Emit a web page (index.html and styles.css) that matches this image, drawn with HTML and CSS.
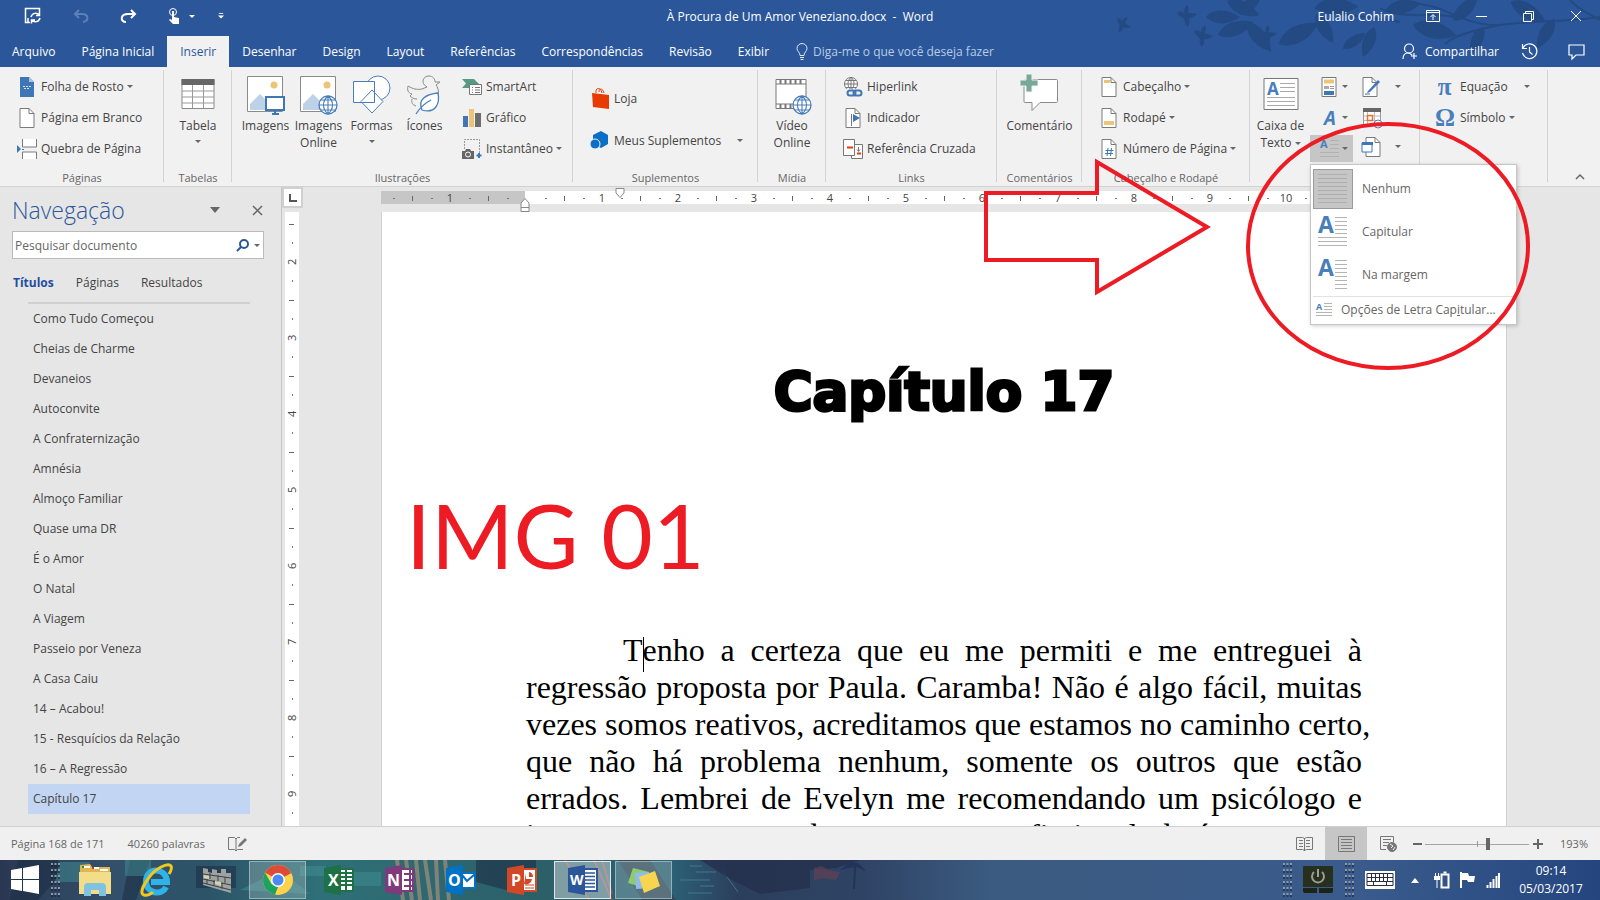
FILE: index.html
```html
<!DOCTYPE html>
<html lang="pt-BR">

<head>
    <meta charset="UTF-8">
    <meta name="viewport" content="width=device-width, initial-scale=1.0">
    <title>À Procura de Um Amor Veneziano.docx - Word</title>
    <link rel="stylesheet" href="styles.css">
</head>

<body>
    <!-- Shared shapes -->
    <svg class="defs" width="0" height="0">
        <symbol id="page" viewBox="0 0 16 20">
            <path d="M1 .5h9l5 5v14H1z" fill="#fff" stroke="#7a7a7a" />
            <path d="M10 .5v5h5" fill="none" stroke="#7a7a7a" />
        </symbol>
        <symbol id="globe" viewBox="0 0 20 20">
            <circle cx="10" cy="10" r="9" fill="#fff" stroke="#4a7ebb" stroke-width="1.3" />
            <path d="M10 1v18M1 10h18M3 5h14M3 15h14M10 1c-6 5-6 13 0 18M10 1c6 5 6 13 0 18" fill="none" stroke="#4a7ebb" stroke-width="1.1" />
        </symbol>
        <symbol id="leaf" viewBox="0 0 30 12">
            <path d="M0 6C7-2 20-1 30 6C20 13 8 14 0 6z" fill="#234a82" />
        </symbol>
        <symbol id="bird" viewBox="0 0 24 24">
            <path d="M1 9c4-3 6-2 8 0c-1-4 1-7 3-9c2 3 2 6 1 9c3-1 6 1 10 0c-2 4-6 5-9 6c1 3 1 6-1 9c-3-3-4-6-4-9c-3-1-5-3-8-6z" fill="#234a82" />
        </symbol>
        <symbol id="grip" viewBox="0 0 10 34">
            <path d="M1 1h9M1 7h9M1 13h9M1 19h9M1 25h9M1 31h9" stroke="#8c98aa" stroke-width="2" stroke-dasharray="2 1.5" />
            <path d="M1 3h9M1 9h9M1 15h9M1 21h9M1 27h9M1 33h9" stroke="#101827" stroke-width="1" stroke-dasharray="2 1.5" />
        </symbol>
    </svg>

    <header class="top">
        <svg class="branches" width="500" height="67" viewBox="0 0 500 67">
            <g fill="none" stroke="#234a82" stroke-width="2">
                <path d="M500 17C470 22 440 20 400 25C370 27 345 8 330 6L300 0M355 17C330 12 300 20 280 8M400 25C375 30 355 35 345 44M300 22C270 16 240 16 215 8M500 20C490 14 478 10 470 0M372 30C385 40 380 48 375 50" />
            </g>
            <use href="#leaf" x="106" y="10" width="34" height="14" />
            <use href="#leaf" x="125" y="0" width="36" height="14" transform="rotate(24 140 8)" />
            <use href="#leaf" x="117" y="22" width="38" height="15" transform="rotate(-20 133 30)" />
            <use href="#leaf" x="150" y="16" width="38" height="16" transform="rotate(50 150 20)" />
            <use href="#leaf" x="135" y="0" width="30" height="12" transform="rotate(-40 148 5)" />
            <use href="#leaf" x="176" y="26" width="46" height="18" transform="rotate(-28 196 35)" />
            <use href="#leaf" x="215" y="-2" width="44" height="17" />
            <use href="#leaf" x="212" y="16" width="34" height="14" transform="rotate(60 222 22)" />
            <use href="#leaf" x="262" y="26" width="32" height="13" transform="rotate(110 270 34)" />
            <use href="#leaf" x="312" y="20" width="46" height="18" transform="rotate(14 330 28)" />
            <use href="#leaf" x="350" y="3" width="36" height="14" transform="rotate(-45 365 12)" />
            <use href="#leaf" x="375" y="30" width="30" height="12" transform="rotate(115 382 34)" />
            <use href="#leaf" x="285" y="0" width="36" height="14" transform="rotate(-10 300 5)" />
            <use href="#leaf" x="410" y="4" width="40" height="16" transform="rotate(30 430 8)" />
            <use href="#leaf" x="440" y="22" width="34" height="14" transform="rotate(120 450 28)" />
            <use href="#leaf" x="240" y="38" width="28" height="11" transform="rotate(-35 250 42)" />
            <use href="#bird" x="14" y="14" width="18" height="20" transform="rotate(30 22 24)" />
            <use href="#bird" x="76" y="4" width="22" height="24" />
            <use href="#bird" x="92" y="24" width="22" height="24" transform="rotate(12 103 36)" />
            <use href="#bird" x="158" y="24" width="20" height="22" />
        </svg>

        <div class="titlebar">
            <div class="quick">
                <button class="icon-btn" aria-label="Salvar"><svg width="18" height="18" viewBox="0 0 18 18" fill="none" stroke="#fff" stroke-width="1.5"><path d="M6 15.500H1.500V1.500H15.500V5" /><path d="M4 11v4" /><path d="M7 10c1-4 6-5 8-2M15.500 5v3.500H12M16 11c-1 4-6 5-8 2M7.500 16.500V13H11" /></svg></button>
                <button class="icon-btn" aria-label="Desfazer"><svg width="16" height="14" viewBox="0 0 16 14" fill="none" stroke="#5b80ba" stroke-width="2"><path d="M6 1L2 5l4 4M2 5h7c7 0 7 7 1 8" /></svg></button>
                <button class="icon-btn" aria-label="Refazer"><svg width="17" height="15" viewBox="0 0 17 15" fill="none" stroke="#fff" stroke-width="2"><path d="M11 1l4 4l-4 4M15 5H8C0 5 0 13 6 13" /></svg></button>
                <button class="icon-btn touch" aria-label="Modo de toque"><svg width="12" height="16" viewBox="0 0 12 16"><circle cx="5" cy="4" r="3.500" fill="none" stroke="#fff" /><path d="M4 3h2v6l5 1v6H5L1 12l1-1l2 1z" fill="#fff" /></svg><i class="caret white"></i></button>
                <button class="icon-btn custom" aria-label="Personalizar"><svg width="6" height="8" viewBox="0 0 7 8"><path d="M1 1h5" stroke="#fff" /><path d="M0 3.500h7L3.500 7z" fill="#fff" /></svg></button>
            </div>
            <div class="doc-title">À Procura de Um Amor Veneziano.docx &nbsp;-&nbsp; Word</div>
            <div class="window-tools">
                <span class="user">Eulalio Cohim</span>
                <button class="icon-btn" aria-label="Opções da faixa"><svg width="14" height="12" viewBox="0 0 14 12" fill="none" stroke="#fff"><path d="M.5 .5h13v11H.5zM.5 2.500h13M7 10V5M4.500 7L7 4.500L9.500 7" /></svg></button>
                <button class="icon-btn" aria-label="Minimizar"><svg width="11" height="11" viewBox="0 0 11 11"><path d="M0 5.500h11" stroke="#fff" /></svg></button>
                <button class="icon-btn" aria-label="Restaurar"><svg width="11" height="11" viewBox="0 0 11 11" fill="none" stroke="#fff"><path d="M.5 2.500h8v8h-8zM2.500 2.500v-2h8v8h-2" /></svg></button>
                <button class="icon-btn" aria-label="Fechar"><svg width="12" height="12" viewBox="0 0 12 12"><path d="M1 1l10 10M11 1L1 11" stroke="#fff" /></svg></button>
            </div>
        </div>

        <nav class="tabs">
            <a href="#">Arquivo</a>
            <a href="#">Página Inicial</a>
            <a href="#" class="active">Inserir</a>
            <a href="#">Desenhar</a>
            <a href="#">Design</a>
            <a href="#">Layout</a>
            <a href="#">Referências</a>
            <a href="#">Correspondências</a>
            <a href="#">Revisão</a>
            <a href="#">Exibir</a>
            <label class="tell-me">
                <svg width="12" height="17" viewBox="0 0 12 17" fill="none" stroke="#dfe8f5"><path d="M4 12.500C4 9 1 8.500 1 5.500a5 5 0 0 1 10 0C11 8.500 8 9 8 12.500zM4 14.500h4M4.500 16.500h3" /></svg>
                <input type="text" placeholder="Diga-me o que você deseja fazer">
            </label>
            <div class="tab-tools">
                <button class="icon-btn share"><svg width="16" height="17" viewBox="0 0 16 17" fill="none" stroke="#fff" stroke-width="1.200"><circle cx="7" cy="5.500" r="4.500" /><path d="M1 16c0-4 2-6 5-6c2 0 3 1 4 2M12 10v6M9 13h6" /></svg>Compartilhar</button>
                <button class="icon-btn" aria-label="Histórico"><svg width="17" height="17" viewBox="0 0 17 17" fill="none" stroke="#fff" stroke-width="1.200"><path d="M2 5a7.300 7.300 0 1 1-.5 5M1.500 1v4.500H6M8.500 4v5l3 2.500" /></svg></button>
                <button class="icon-btn" aria-label="Comentários"><svg width="17" height="16" viewBox="0 0 17 16" fill="none" stroke="#fff" stroke-width="1.200"><path d="M1 1h15v10H8l-4 4v-4H1z" /></svg></button>
            </div>
        </nav>
    </header>

    <section class="ribbon">
        <div class="group g-paginas">
            <div class="rows">
                <button class="cmd"><svg width="16" height="20" viewBox="0 0 16 20"><path d="M1 0h9l5 5v15H1z" fill="#3f76b5" /><path d="M10 0v5h5z" fill="#a9c3e0" /><path d="M4 9.500h8M5 11.500h6" stroke="#cfe0f2" stroke-dasharray="2 1" /></svg>Folha de Rosto<i class="caret"></i></button>
                <button class="cmd"><svg width="16" height="20"><use href="#page" /></svg>Página em Branco</button>
                <button class="cmd"><svg class="wide" width="20" height="20" viewBox="0 0 20 20"><path d="M5.500 0v8h14V0M5.500 20v-7h14v7" fill="#fff" stroke="#7a7a7a" /><path d="M0 6l4 4l-4 4z" fill="#3f76b5" /><path d="M5 10.500h2" stroke="#3f76b5" /></svg>Quebra de Página</button>
            </div>
            <div class="group-name">Páginas</div>
        </div>

        <div class="group g-tabelas">
            <div class="bigs">
                <button class="big"><svg width="36" height="40" viewBox="0 0 36 40"><path d="M2 4.500h32v29H2z" fill="#fff" stroke="#8a8a8a" /><path d="M1.500 4h33v6h-33z" fill="#666" /><path d="M2 16h32M2 22h32M2 28h32M12.500 10v23M23.500 10v23" stroke="#999" /></svg>Tabela<i class="caret"></i></button>
            </div>
            <div class="group-name">Tabelas</div>
        </div>

        <div class="group g-ilustra">
            <div class="bigs">
                <button class="big"><svg width="40" height="40" viewBox="0 0 40 40"><path d="M1.500 1.500h35v35h-35z" fill="#fff" stroke="#8a8a8a" /><circle cx="28" cy="10" r="3.500" fill="#ecc477" /><path d="M4 35V29L14 19l9 9v7z" fill="#bdd1e8" /><path d="M20 22h18v13H20z" fill="#fff" stroke="#3f76b5" stroke-width="2" /><path d="M29 35v3M26 39h7" stroke="#3f76b5" stroke-width="2" /></svg>Imagens</button>
                <button class="big"><svg width="40" height="40" viewBox="0 0 40 40"><path d="M1.500 1.500h35v35h-35z" fill="#fff" stroke="#8a8a8a" /><circle cx="28" cy="10" r="3.500" fill="#ecc477" /><path d="M4 35V29L14 19l9 9v7z" fill="#bdd1e8" /><use href="#globe" x="19" y="20" width="20" height="20" /></svg>Imagens Online</button>
                <button class="big"><svg width="40" height="40" viewBox="0 0 40 40" fill="#fff" stroke="#4a7ebb"><circle cx="26" cy="13" r="12" /><path d="M1.500 6.500h21v21h-21zM20 15l11 11.500L20 38L9 26.500z" /></svg>Formas<i class="caret"></i></button>
                <button class="big"><svg width="40" height="40" viewBox="0 0 40 40" fill="none" stroke="#8a8a8a"><path d="M22 12C15 8 18 1 24 1c4 0 6 3 6 6h5l-4 3c3 4 3 8 1 12M22 12l-5 2c-5 1-9 0-14-3c-1 4 0 7 4 8l-2 2c2 2 4 3 7 3M7 24c-1 4 1 6 4 7" /><path d="M33 18c2 10-2 21-16 17c-5-11 5-16 16-17zM11 39c5-8 9-11 15-14" fill="#fff" stroke="#4a7ebb" stroke-width="1.300" /></svg>Ícones</button>
            </div>
            <div class="rows">
                <button class="cmd"><svg class="wide" width="20" height="20" viewBox="0 0 20 20"><path d="M0 2h12l5 5l-5 4H0l4-4.500z" fill="#569a83" /><path d="M7.500 7.500h12v10h-12z" fill="#fff" stroke="#777" /><path d="M10 10.500h1M13 10.500h5M10 13h1M13 13h5M10 15.500h1M13 15.500h5" stroke="#777" /></svg>SmartArt</button>
                <button class="cmd"><svg class="wide" width="20" height="20" viewBox="0 0 20 20"><path d="M1 8h5v11H1z" fill="#3f76b5" /><path d="M7 1h5v18H7z" fill="#ecc477" /><path d="M13 5h6v14h-6z" fill="#6d6d6d" /></svg>Gráfico</button>
                <button class="cmd"><svg class="wide" width="20" height="20" viewBox="0 0 20 20"><path d="M2.500 10V.5h15V14" fill="none" stroke="#999" stroke-dasharray="2 1" /><path d="M0 12h3l1-2h4l1 2h3v8H0z" fill="#666" /><circle cx="6" cy="15.500" r="2.500" fill="#666" stroke="#fff" /><path d="M17 14v5M14.500 16.500h5" stroke="#3f76b5" stroke-width="2" /></svg>Instantâneo<i class="caret"></i></button>
            </div>
            <div class="group-name">Ilustrações</div>
        </div>

        <div class="group g-suple">
            <div class="rows two">
                <button class="cmd"><svg class="wide" width="20" height="22" viewBox="0 0 20 22"><path d="M2 6l17 2v14L3 20z" fill="#e83b04" /><path d="M6 6c-1-6 5-6 6 0M9 5c0-4 4-4 5 1" fill="none" stroke="#e83b04" /></svg>Loja</button>
                <button class="cmd"><svg class="wide" width="20" height="20" viewBox="0 0 20 20"><path d="M3 5l8-4l7 4v9l-7 4l-8-4z" fill="#0b6fc8" /><circle cx="5" cy="14" r="5" fill="#0b6fc8" stroke="#f1f1f1" /></svg>Meus Suplementos<i class="caret far"></i></button>
            </div>
            <div class="group-name">Suplementos</div>
        </div>

        <div class="group g-midia">
            <div class="bigs">
                <button class="big"><svg width="40" height="40" viewBox="0 0 40 40"><path d="M4 4.500h30v29H4z" fill="#fff" stroke="#777" /><path d="M4 9h30M4 29h18" stroke="#777" /><path d="M8.500 5v4M13.500 5v4M18.500 5v4M23.500 5v4M28.500 5v4M8.500 29v4M13.500 29v4M18.500 29v4" stroke="#777" stroke-width="2" /><use href="#globe" x="20" y="20" width="20" height="20" /></svg>Vídeo Online</button>
            </div>
            <div class="group-name">Mídia</div>
        </div>

        <div class="group g-links">
            <div class="rows">
                <button class="cmd"><svg class="wide" width="20" height="20" viewBox="0 0 20 20" fill="none"><circle cx="8" cy="7" r="6.500" fill="#fff" stroke="#777" /><path d="M8 0v14M1 7h14M3 3.500h10M3 10.500h10M8 0c-4 4-4 9 0 13M8 0c4 4 4 9 0 13" stroke="#777" /><path d="M3 12h16v8H3z" fill="#f1f1f1" /><rect x="4.500" y="13.500" width="8" height="5" rx="2.500" stroke="#3f76b5" stroke-width="2" /><rect x="10.500" y="13.500" width="8" height="5" rx="2.500" stroke="#3f76b5" stroke-width="2" /></svg>Hiperlink</button>
                <button class="cmd"><svg class="wide" width="20" height="20" viewBox="0 0 20 20"><use href="#page" x="2" width="16" height="20" /><path d="M8.500 6v12" stroke="#777" /><path d="M10 6l7 4l-7 4z" fill="#3f76b5" /></svg>Indicador</button>
                <button class="cmd"><svg class="wide" width="20" height="20" viewBox="0 0 20 20"><path d="M8.500 5.500h11v14h-11z" fill="#fff" stroke="#777" /><path d="M.5 .5h11v16H.5z" fill="#fff" stroke="#777" /><path d="M4 8.500h6M14 14.500h4" stroke="#e83b04" stroke-width="2" /><path d="M15.500 8v4M14 10.500l1.500 2l1.500-2" stroke="#777" fill="none" /></svg>Referência Cruzada</button>
            </div>
            <div class="group-name">Links</div>
        </div>

        <div class="group g-coment">
            <div class="bigs">
                <button class="big"><svg width="40" height="40" viewBox="0 0 40 40"><path d="M5.500 4.500h31q1 0 1 1v21q0 1-1 1H20l-8 8v-8H5q-1 0-1-1V5.500z" fill="#fff" stroke="#8a8a8a" /><path d="M6-1h6v6h6v6h-6v6H6v-6H0V5h6z" fill="#77a898" stroke="#f1f1f1" /></svg>Comentário</button>
            </div>
            <div class="group-name">Comentários</div>
        </div>

        <div class="group g-cabec">
            <div class="rows">
                <button class="cmd"><svg width="16" height="20" viewBox="0 0 16 20"><use href="#page" /><path d="M3 3h6v3H3z" fill="#ecc477" /></svg>Cabeçalho<i class="caret"></i></button>
                <button class="cmd"><svg width="16" height="20" viewBox="0 0 16 20"><use href="#page" /><path d="M3 13h10v4H3z" fill="#ecc477" /></svg>Rodapé<i class="caret"></i></button>
                <button class="cmd"><svg width="16" height="20" viewBox="0 0 16 20"><use href="#page" /><path d="M7 9l-1 8M10.500 9l-1 8M4.500 11.500h8M4 14.500h8" stroke="#3f76b5" /></svg>Número de Página<i class="caret"></i></button>
            </div>
            <div class="group-name">Cabeçalho e Rodapé</div>
        </div>

        <div class="group g-texto">
            <div class="bigs">
                <button class="big"><svg width="40" height="40" viewBox="0 0 40 40"><path d="M3 3.500h34v31H3z" fill="#fff" stroke="#777" /><text x="6" y="20" class="letter" font-size="17">A</text><path d="M19 8.500h15M19 12.500h15M19 16.500h15M6 22.500h28M6 26.500h28M6 30.500h28" stroke="#aaa" /></svg><span>Caixa de Texto<i class="caret"></i></span></button>
            </div>
            <div class="mini">
                <button class="mini-btn" aria-label="Partes Rápidas"><svg width="20" height="20" viewBox="0 0 20 20"><path d="M3 .5h14v19H3z" fill="#fff" stroke="#777" /><path d="M5 2.500h10v4H5z" fill="#ecc477" /><path d="M5 9h5v3H5z" fill="#aaa" /><path d="M11 9.500h4M11 11.500h4" stroke="#999" /><path d="M5 14h10v4H5z" fill="#3f76b5" /></svg><i class="caret"></i></button>
                <button class="mini-btn b" aria-label="Linha de Assinatura"><svg width="20" height="20" viewBox="0 0 20 20"><use href="#page" x="0" width="16" height="20" /><path d="M6 14L16 3l2 2L8 15l-3 1z" fill="#3f76b5" /><path d="M3 17h5" stroke="#3f76b5" /></svg><i class="caret"></i></button>
                <button class="mini-btn" aria-label="WordArt"><svg width="20" height="20" viewBox="0 0 20 20"><text x="5" y="17" class="letter" font-size="19" font-style="italic">A</text></svg><i class="caret"></i></button>
                <button class="mini-btn b" aria-label="Data e Hora"><svg width="20" height="20" viewBox="0 0 20 20"><path d="M1.500 1.500h17v16h-17z" fill="#fff" stroke="#999" /><path d="M1 0h18v4H1z" fill="#666" /><path d="M2 8h16M2 12.500h16M5.500 4v13M12.500 4v13" stroke="#bbb" /><path d="M5.500 7.500h5v5h-5z" fill="#fff" stroke="#e2702f" stroke-width="1.500" /><circle cx="16" cy="16" r="4" fill="#fff" stroke="#4a7ebb" /><path d="M16 14v2h2" fill="none" stroke="#4a7ebb" /></svg></button>
                <button class="mini-btn pressed" aria-label="Letra Capitular"><svg width="20" height="20" viewBox="0 0 20 20"><text x="1" y="9" class="letter" font-size="11">A</text><path d="M11 1.500h9M11 5.500h9M11 9.500h9M1 13.500h19M1 17.500h19" stroke="#b1b1b1" /></svg><i class="caret"></i></button>
                <button class="mini-btn b" aria-label="Objeto"><svg width="20" height="20" viewBox="0 0 20 20"><use href="#page" x="3" width="16" height="20" /><path d="M0 6h10v9H0z" fill="#fff" stroke="#3f76b5" /><path d="M0 5h11v3H0z" fill="#3f76b5" /></svg><i class="caret"></i></button>
            </div>

            <!-- Drop cap menu, open under its button -->
            <div class="menu" role="menu">
                <button class="menu-item"><span class="menu-pic on"><svg width="34" height="34" viewBox="0 0 34 34"><path d="M2 2.500h29M2 6.500h29M2 10.500h29M2 14.500h29M2 18.500h29M2 22.500h29M2 26.500h29M2 30.500h29" stroke="#aeaeae" /></svg></span>Nenhum</button>
                <button class="menu-item"><span class="menu-pic"><svg width="34" height="34" viewBox="0 0 34 34"><text x="2" y="18" class="letter" font-size="23">A</text><path d="M19 2.500h12M19 6.500h12M19 10.500h12M19 14.500h12M19 18.500h12M2 22.500h29M2 26.500h29M2 30.500h29" stroke="#b4b4b4" /></svg></span>Capitular</button>
                <button class="menu-item"><span class="menu-pic"><svg width="34" height="34" viewBox="0 0 34 34"><text x="2" y="18" class="letter" font-size="23">A</text><path d="M19 2.500h12M19 6.500h12M19 10.500h12M19 14.500h12M19 18.500h12M19 22.500h12M19 26.500h12M19 30.500h12" stroke="#b4b4b4" /></svg></span>Na margem</button>
                <button class="menu-item options"><svg width="16" height="16" viewBox="0 0 16 16"><text x="0" y="8" class="letter" font-size="9">A</text><path d="M8 1.500h8M8 4.500h8M8 7.500h8M0 10.500h16M0 13.500h16" stroke="#b4b4b4" /></svg><span>Opções de Letra Cap<u>i</u>tular...</span></button>
            </div>
        </div>

        <div class="group g-simb">
            <div class="rows">
                <button class="cmd"><span class="greek">π</span>Equação<i class="caret far"></i></button>
                <button class="cmd"><span class="greek">Ω</span>Símbolo<i class="caret"></i></button>
            </div>
        </div>

        <button class="icon-btn collapse" aria-label="Recolher a faixa"><svg width="10" height="6" viewBox="0 0 10 6" fill="none" stroke="#666" stroke-width="1.500"><path d="M1 5l4-4l4 4" /></svg></button>
    </section>

    <main class="work">
        <aside class="nav-pane">
            <div class="nav-head">
                <h2>Navegação</h2>
                <button class="icon-btn" aria-label="Opções do painel"><svg width="10" height="6" viewBox="0 0 10 6"><path d="M0 0h10L5 6z" fill="#666" /></svg></button>
                <button class="icon-btn" aria-label="Fechar painel"><svg width="11" height="11" viewBox="0 0 11 11"><path d="M1 1l9 9M10 1l-9 9" stroke="#666" stroke-width="1.500" /></svg></button>
            </div>
            <label class="search">
                <input type="text" placeholder="Pesquisar documento">
                <svg width="13" height="13" viewBox="0 0 13 13" fill="none" stroke="#2b579a" stroke-width="2"><circle cx="8" cy="5" r="4" /><path d="M5 8l-4 4" /></svg>
                <i class="caret"></i>
            </label>
            <div class="nav-tabs">
                <a href="#" class="active">Títulos</a>
                <a href="#">Páginas</a>
                <a href="#">Resultados</a>
            </div>
            <ul class="headings">
                <li><a href="#">Como Tudo Começou</a></li>
                <li><a href="#">Cheias de Charme</a></li>
                <li><a href="#">Devaneios</a></li>
                <li><a href="#">Autoconvite</a></li>
                <li><a href="#">A Confraternização</a></li>
                <li><a href="#">Amnésia</a></li>
                <li><a href="#">Almoço Familiar</a></li>
                <li><a href="#">Quase uma DR</a></li>
                <li><a href="#">É o Amor</a></li>
                <li><a href="#">O Natal</a></li>
                <li><a href="#">A Viagem</a></li>
                <li><a href="#">Passeio por Veneza</a></li>
                <li><a href="#">A Casa Caiu</a></li>
                <li><a href="#">14 – Acabou!</a></li>
                <li><a href="#">15 - Resquícios da Relação</a></li>
                <li><a href="#">16 – A Regressão</a></li>
                <li class="current"><a href="#">Capítulo 17</a></li>
            </ul>
        </aside>

        <div class="v-side">
            <button class="tab-stop" aria-label="Tabulação"><svg width="8" height="8" viewBox="0 0 8 8"><path d="M1 0v7h7" fill="none" stroke="#555" stroke-width="2" /></svg></button>
            <div class="v-ruler">
                <span>2</span><span>3</span><span>4</span><span>5</span><span>6</span><span>7</span><span>8</span><span>9</span>
            </div>
        </div>

        <div class="canvas">
            <div class="h-ruler">
                <div class="h-scale">
                    <span></span><span>1</span><span></span><span>1</span><span>2</span><span>3</span><span>4</span><span>5</span><span>6</span><span>7</span><span>8</span><span>9</span><span>10</span><span></span><span></span>
                </div>
                <svg class="indent-left" width="10" height="14" viewBox="0 0 10 14" fill="#fff" stroke="#888"><path d="M1 9.500V5l4-4.500L9 5v4.500zM1 9.500h8v4H1z" /></svg>
                <svg class="indent-first" width="10" height="10" viewBox="0 0 10 10" fill="#fff" stroke="#888"><path d="M1 .5h8v4.500L5 9.500L1 5z" /></svg>
            </div>
            <article class="sheet">
                <h1>Capítulo 17</h1>
                <p>T<span class="cursor"></span>enho a certeza que eu me permiti e me entreguei à regressão proposta por Paula. Caramba! Não é algo fácil, muitas <span class="keep">vezes somos reativos, acreditamos que estamos no caminho certo,</span> que não há problema nenhum, somente os outros que estão errados. Lembrei de Evelyn me recomendando um psicólogo e isso me causara medo, mas um profissional dará uma nova ordem a</p>
                <div class="img-tag">IMG 01</div>
            </article>
        </div>
    </main>

    <footer class="status">
        <span>Página 168 de 171</span>
        <span>40260 palavras</span>
        <button class="icon-btn" aria-label="Revisão de texto"><svg width="20" height="16" viewBox="0 0 20 16" fill="none" stroke="#777"><path d="M12 1.500H9.500L8 3L6.500 1.500H.5v12h6L8 15l1.500-1.500H15M8 3v12" /><path d="M10 11l1-3l6-6l2 2l-6 6z" fill="#777" stroke="none" /></svg></button>
        <div class="views">
            <button class="view" aria-label="Modo de Leitura"><svg width="17" height="16" viewBox="0 0 17 16" fill="none" stroke="#777"><path d="M8.500 2v13M.5 1.500h6l2 1l2-1h6v12h-6l-2 1l-2-1h-6zM3 4.500h4M3 7.500h4M3 10.500h4M10 4.500h4M10 7.500h4M10 10.500h4" /></svg></button>
            <button class="view on" aria-label="Layout de Impressão"><svg width="17" height="16" viewBox="0 0 17 16" fill="none" stroke="#777"><path d="M.5 .5h16v15H.5zM3 3.500h11M3 6.500h11M3 9.500h11M3 12.500h11" /></svg></button>
            <button class="view" aria-label="Layout da Web"><svg width="17" height="16" viewBox="0 0 17 16" fill="none" stroke="#777"><path d="M6 13.500H.5V.5h13V6M3 3.500h8M3 6.500h6M3 9.500h4" /><circle cx="12" cy="11" r="4.500" fill="#777" /><path d="M10 8l3 2l-2 2M13 14l2-3" stroke="#f0f0f0" /></svg></button>
            <button class="zoom-btn" aria-label="Menos zoom"><svg width="10" height="10" viewBox="0 0 10 10"><path d="M0 5h9" stroke="#666" stroke-width="2" /></svg></button>
            <input class="zoom" type="range" min="0" max="100" value="61" aria-label="Zoom">
            <button class="zoom-btn" aria-label="Mais zoom"><svg width="10" height="10" viewBox="0 0 10 10"><path d="M0 5h10M5 0v10" stroke="#666" stroke-width="2" /></svg></button>
            <span class="percent">193%</span>
        </div>
    </footer>

    <div class="taskbar">
        <svg class="wallpaper" viewBox="0 0 1600 40" preserveAspectRatio="none">
            <defs>
                <linearGradient id="bg">
                    <stop offset="0" stop-color="#2a3752" /><stop offset=".07" stop-color="#33506b" /><stop offset=".13" stop-color="#2c5468" />
                    <stop offset=".2" stop-color="#2f7078" /><stop offset=".34" stop-color="#2c5f68" /><stop offset=".42" stop-color="#2c6076" />
                    <stop offset=".46" stop-color="#2b3f5c" /><stop offset=".54" stop-color="#2f4365" /><stop offset=".62" stop-color="#3b5b80" />
                    <stop offset=".85" stop-color="#3a5b8c" /><stop offset="1" stop-color="#25457f" />
                </linearGradient>
            </defs>
            <path d="M0 0h1600v40H0z" fill="url(#bg)" />
            <path d="M18 0h40v18l-20 22H10zM150 0l-14 40h-14L130 0zM196 6h40v22h-40zM476 0h60v24l-30 6l-30-8z" fill="#1c2f44" opacity=".6" />
            <path d="M60 2h30l-6 20H55zM125 0h26v16h-26zM240 30l40-20l30 24zM345 12h36v14h-36zM300 6h26v10h-26z" fill="#3f8f93" opacity=".5" />
            <path d="M397 0l6 40M406 0l6 40M416 0l4 40M425 0l6 40M436 0l2 40M445 0l4 40" stroke="#a58f7d" stroke-width="4" opacity=".7" />
            <path d="M565 0l24 40M594 0l18 40M602 0l10 34" stroke="#b5514e" stroke-width="2" opacity=".7" />
            <path d="M618 0l24 40h34L650 0z" fill="#33404f" opacity=".7" />
            <path d="M690 6h12M696 12h20M680 20h30M700 26h14M688 33h24M722 10l16 22" stroke="#4a8a9c" opacity=".7" />
            <path d="M700 0h160l-24 8l-26 2v18l-50 6l-28-14z" fill="#24304d" opacity=".8" />
            <path d="M814 8l8-2l6 4l12 2l-4 8l-14-2l-8 2z" fill="#6d4350" opacity=".6" />
            <path d="M850 2l-10 8l14-3l-1 22h2l1-22l10 4l-8-8z" fill="#22345a" />
        </svg>
        <div class="apps">
            <button class="start" aria-label="Iniciar"><svg width="28" height="30" viewBox="0 0 28 30" fill="#fff"><path d="M0 5l11-2v11H0zM12 3l16-3v14H12zM0 15h11v11L0 24zM12 15h16v14l-16-3z" /></svg></button>
            <svg width="10" height="34"><use href="#grip" /></svg>
            <button class="app first" aria-label="Explorador"><svg width="34" height="34" viewBox="0 0 34 34"><path d="M2 2l10-1l2 3h18v27H2z" fill="#e0b653" /><path d="M4 4h8M14 5h7M22 7h8" stroke="#fff" stroke-width="2" /><path d="M4 4h2" stroke="#2b8a3e" stroke-width="2" /><path d="M14 5h2" stroke="#c33" stroke-width="2" /><path d="M1 9h32v22H1z" fill="#f4dd88" /><path d="M6 33V24q0-4 4-4h14q4 0 4 4v9h-7v-6h-8v6z" fill="#7fc3e2" /></svg></button>
            <button class="app" aria-label="Internet Explorer"><svg width="34" height="34" viewBox="0 0 34 34" fill="none"><path d="M27 24c-4 9-20 7-20-6c0-14 21-14 21 1H12" stroke="#2fb4e9" stroke-width="6" /><path d="M9 16c6-10 20-17 23-13c1 2 0 5-2 8M9 16C3 24 1 31 5 32c3 1 7-1 9-3" stroke="#f2c81e" stroke-width="3" /></svg></button>
            <button class="app" aria-label="Firewall"><svg width="30" height="28" viewBox="0 0 30 28"><path d="M1 2l5 1v3l4 1V3l5 1v3l4 0V3l5 0v4h5v20L1 19z" fill="#9ea2a0" /><path d="M1 8l28 4M1 13l28 6M1 17l28 7M8 7v6M16 9v6M23 11v6M5 13v5M12 14v6M20 17v6" stroke="#3c4244" /><path d="M2 9l5 1v3l-5-1zM13 15l6 1v4l-6-2z" fill="#d4d0b0" /></svg></button>
            <button class="app open" aria-label="Chrome"><svg width="32" height="32" viewBox="0 0 32 32"><circle cx="16" cy="16" r="15" fill="#fdd34c" /><path d="M16 16L3 8.500A15 15 0 0 1 29 8.500z" fill="#dc4a38" /><path d="M29.500 9H16v7z" fill="#dc4a38" /><path d="M3 8.500L9.500 20L16 23l-3 7.700A15 15 0 0 1 3 8.500z" fill="#1ca261" /><circle cx="16" cy="16" r="7" fill="#fff" /><circle cx="16" cy="16" r="5.500" fill="#4a8af4" /></svg></button>
            <button class="app" aria-label="Excel"><svg width="32" height="32" viewBox="0 0 32 32"><path d="M16 5h14v22H16z" fill="#fff" stroke="#1e7145" stroke-width="2" /><path d="M18 9h11M18 13h11M18 17h11M18 21h11M23 6v20" stroke="#1e7145" stroke-width="2" /><path d="M1 4l17-3v30L1 28z" fill="#1e7145" /><text x="5" y="22" class="logo">X</text></svg></button>
            <button class="app" aria-label="OneNote"><svg width="32" height="32" viewBox="0 0 32 32"><path d="M16 5h13v22H16z" fill="#fff" stroke="#80397b" stroke-width="2" /><path d="M26 5v22M20 10h11M20 16h11M20 22h11" stroke="#80397b" stroke-width="2" /><path d="M1 4l17-3v30L1 28z" fill="#80397b" /><text x="3" y="22" class="logo">N</text></svg></button>
            <button class="app" aria-label="Outlook"><svg width="32" height="32" viewBox="0 0 32 32"><path d="M16 9h14v15H16z" fill="#fff" stroke="#0072c6" stroke-width="2" /><path d="M17 11l5 6l8-7" fill="none" stroke="#0072c6" stroke-width="2" /><path d="M1 4l17-3v30L1 28z" fill="#0072c6" /><text x="3" y="22" class="logo">O</text></svg></button>
            <button class="app" aria-label="PowerPoint"><svg width="32" height="32" viewBox="0 0 32 32"><path d="M16 5h14v22H16z" fill="#fff" stroke="#d24726" stroke-width="2" /><path d="M20 9v6h6a6 6 0 0 1-8 5M23 8a5 5 0 0 1 4 5h-4z" fill="#d24726" /><path d="M19 21h9M19 24h9" stroke="#d24726" /><path d="M1 4l17-3v30L1 28z" fill="#d24726" /><text x="5" y="22" class="logo">P</text></svg></button>
            <button class="app open front" aria-label="Word"><svg width="32" height="32" viewBox="0 0 32 32"><path d="M16 5h14v22H16z" fill="#fff" stroke="#2b579a" stroke-width="2" /><path d="M18 9h10M18 12.500h10M18 16h10M18 19.500h10M18 23h10" stroke="#2b579a" stroke-width="1.500" /><path d="M1 4l17-3v30L1 28z" fill="#2b579a" /><text x="3" y="21" class="logo w">W</text></svg></button>
            <button class="app open" aria-label="Notas Autoadesivas"><svg width="34" height="30" viewBox="0 0 34 30"><path d="M6 3l16 4l-4 16L1 18z" fill="#8ecb6e" /><path d="M8 8l14-1l2 16l-15 1z" fill="#8cbcf0" /><path d="M12 12l16-6l5 15l-16 7z" fill="#f7d54e" /></svg></button>
        </div>
        <div class="tray">
            <svg width="10" height="34"><use href="#grip" /></svg>
            <svg width="32" height="30" viewBox="0 0 32 30"><path d="M2 1h28q1 0 1 1v20H1V2q0-1 1-1z" fill="#27301f" /><path d="M1 23h14v5H3q-2 0-2-2zM17 23h14v3q0 2-2 2H17z" fill="#1b2417" /><path d="M12 7a6 6 0 1 0 8 0M16 4v8" fill="none" stroke="#9a9f93" stroke-width="2" /></svg>
            <svg width="10" height="34"><use href="#grip" /></svg>
            <svg class="keyboard" width="32" height="20" viewBox="0 0 32 20"><path d="M1 1h30v18H1z" fill="#fff" /><path d="M3 3.500h26v12H3zM3 7.500h26M3 11.500h26M7.500 3v9M11.500 3v9M15.500 3v9M19.500 3v9M23.500 3v9M9.500 12v4M22.500 12v4" fill="none" stroke="#27303f" /></svg>
            <svg class="up" width="8" height="5" viewBox="0 0 8 5"><path d="M0 5h8L4 0z" fill="#fff" /></svg>
            <svg width="16" height="18" viewBox="0 0 16 18"><path d="M7.500 3.500h7v13h-7z" fill="none" stroke="#fff" stroke-width="2" /><path d="M9.500 1.500h3" stroke="#fff" stroke-width="2" /><path d="M3 9v8M1.500 2v3M4.500 2v3" stroke="#fff" /><path d="M0 5h6v4H0z" fill="#fff" /></svg>
            <svg width="16" height="18" viewBox="0 0 16 18"><path d="M1 1v16" stroke="#fff" stroke-width="2" /><path d="M2 2h6l1 3h6l-1 6H8L7 9H2z" fill="#fff" /></svg>
            <svg width="14" height="16" viewBox="0 0 14 16"><path d="M1.500 13v3M4.500 10v6M7.500 7v9M10.500 4v12M13 1v15" stroke="#fff" stroke-width="2" /></svg>
            <div class="clock">09:14<br>05/03/2017</div>
        </div>
    </div>

    <!-- Red marks drawn over the window -->
    <svg class="marks" width="580" height="260" viewBox="0 0 580 260" fill="none" stroke="#ed1c24" stroke-width="4">
        <path d="M26 73h111V42l110 65L137 172v-32H26z" />
        <ellipse cx="428" cy="126" rx="140" ry="122" />
    </svg>
</body>

</html>
```
FILE: styles.css
```css
* {
    box-sizing: border-box;
}

body {
    margin: 0;
    height: 100vh;
    overflow: hidden;
    position: relative;
    display: flex;
    flex-direction: column;
    font-family: "Open Sans", "Noto Sans", sans-serif;
    font-size: 12px;
    line-height: 17px;
    color: #444;
    background: #e6e6e6;
}

button,
input {
    font: inherit;
    color: inherit;
    border: none;
    background: none;
    padding: 0;
}

a {
    color: inherit;
    text-decoration: none;
}

svg {
    display: block;
    flex: none;
    overflow: visible;
}

.defs {
    position: absolute;
}

.icon-btn {
    display: flex;
    align-items: center;
}

.caret {
    display: inline-block;
    flex: none;
    border: 3px solid transparent;
    border-top-color: #666;
    border-bottom: none;
    margin-left: 5px;
}

.caret.white {
    border-top-color: #fff;
}

.letter {
    font-family: "Open Sans", sans-serif;
    font-weight: 700;
    fill: #4a7ebb;
}

/* Title bar and tabs */
.top {
    position: relative;
    background: #2b579a;
    color: #fff;
}

.branches {
    position: absolute;
    top: 0;
    right: 0;
    overflow: hidden;
}

.titlebar {
    position: relative;
    height: 36px;
    display: grid;
    grid-template-columns: 1fr auto 1fr;
    align-items: center;
    padding: 0 18px 4px 24px;
}

.doc-title {
    margin-left: -6px;
}

.quick {
    display: flex;
    align-items: center;
    gap: 31px;
}

.quick .touch {
    gap: 4px;
}

.quick .custom {
    margin-left: -8px;
}

.window-tools {
    display: flex;
    justify-content: flex-end;
    align-items: center;
    gap: 36px;
}

.user {
    margin-right: -4px;
}

.tabs {
    position: relative;
    height: 31px;
    display: flex;
    padding-left: -1px;
}

.tabs a {
    padding: 7px 13px 0;
}

.tabs a:first-child {
    padding-left: 12px;
}

.tabs .active {
    background: #f1f1f1;
    color: #2b579a;
}

.tell-me {
    display: flex;
    align-items: center;
    gap: 5px;
    padding: 0 13px 0 14px;
}

.tell-me input {
    width: 240px;
}

.tell-me input::placeholder {
    color: #b9cbe6;
    opacity: 1;
}

.tab-tools {
    margin-left: auto;
    display: flex;
    gap: 22px;
    padding-right: 15px;
}

.tab-tools .icon-btn + .icon-btn + .icon-btn {
    margin-left: 8px;
}

.share {
    gap: 7px;
}

/* Ribbon */
.ribbon {
    position: relative;
    z-index: 2;
    height: 120px;
    display: flex;
    background: #f1f1f1;
    border-bottom: 1px solid #d2d2d2;
}

.group {
    position: relative;
    display: grid;
    grid-template-columns: auto 1fr;
    grid-template-rows: 98px 20px;
    flex: none;
}

.group::after {
    content: "";
    position: absolute;
    top: 3px;
    right: 0;
    bottom: 4px;
    border-right: 1px solid #d4d4d4;
}

.group-name {
    grid-column: 1 / -1;
    grid-row: 2;
    align-self: end;
    text-align: center;
    font-size: 11px;
    color: #666;
    line-height: 14px;
}

.g-paginas { width: 164px; padding-left: 19px; }
.g-paginas .group-name { margin-left: -19px; }
.g-tabelas { width: 68px; }
.g-ilustra { width: 341px; padding: 0 7px; }
.g-suple { width: 185px; padding-left: 17px; }
.g-suple .group-name { margin-left: -17px; }
.g-midia { width: 68px; }
.g-links { width: 171px; padding-left: 17px; }
.g-links .group-name { margin-left: -17px; }
.g-coment { width: 85px; }
.g-cabec { width: 168px; padding-left: 19px; }
.g-cabec .group-name { margin-left: -19px; }
.g-texto { width: 170px; padding-left: 4px; z-index: 1; }
.g-simb { width: 128px; padding-left: 15px; }

.rows {
    display: grid;
    grid-template-rows: repeat(3, 31px);
    align-content: start;
    justify-content: start;
    padding-top: 4px;
}

.g-ilustra .rows {
    padding-left: 11px;
}

.rows.two {
    grid-template-rows: repeat(2, 42px);
    padding-top: 10px;
}

.cmd {
    display: flex;
    align-items: center;
    gap: 6px;
    white-space: nowrap;
}

.cmd svg.wide {
    margin-right: -2px;
}

.g-paginas svg.wide {
    margin-left: -2px;
}

.cmd .caret {
    margin-left: -3px;
}

.cmd .caret.far {
    margin-left: 10px;
}

.greek {
    width: 19px;
    font-family: "Liberation Serif", serif;
    font-size: 25px;
    font-weight: 700;
    color: #4a7ebb;
}

.bigs {
    display: flex;
    justify-content: center;
    padding-top: 8px;
}

.g-tabelas .bigs,
.g-midia .bigs,
.g-coment .bigs {
    grid-column: 1 / -1;
}

.big {
    width: 53px;
    display: flex;
    flex-direction: column;
    align-items: center;
    line-height: 17px;
}

.g-coment .big {
    width: 80px;
}

.big svg {
    margin-bottom: 2px;
}

.big > .caret {
    margin: 6px 0 0;
}

.big .caret {
    vertical-align: middle;
}

.big span {
    width: 56px;
}

.big span .caret {
    margin-left: 3px;
}

.mini {
    display: grid;
    grid-template-columns: 43px 60px;
    grid-template-rows: 31px 31px 27px;
    align-content: start;
    padding: 4px 0 0 3px;
}

.mini-btn {
    display: flex;
    align-items: center;
    padding-left: 9px;
}

.mini-btn .caret {
    margin-left: 3px;
}

.mini-btn.b .caret {
    margin-left: 13px;
}

.mini-btn.pressed {
    background: #c6c6c6;
    margin-top: 2px;
    height: 27px;
}

.collapse {
    margin: auto 15px 6px auto;
}

.menu {
    position: absolute;
    z-index: 1;
    top: 97px;
    left: 60px;
    width: 207px;
    padding: 2px;
    background: #fff;
    border: 1px solid #c6c6c6;
    box-shadow: 1px 1px 4px rgba(0, 0, 0, 0.2);
}

.menu-item {
    display: flex;
    align-items: center;
    gap: 9px;
    width: 100%;
    height: 43px;
    color: #666;
}

.menu-pic {
    width: 40px;
    height: 40px;
    padding: 2px;
    border: 1px solid transparent;
}

.menu-pic.on {
    background: #c6c6c6;
    border-color: #9b9b9b;
}

.menu-item.options {
    height: 26px;
    border-top: 1px solid #e1e1e1;
    padding-left: 3px;
}

/* Work area */
.work {
    flex: 1;
    min-height: 0;
    display: flex;
    overflow: hidden;
}

.nav-pane {
    width: 282px;
    flex: none;
    border-right: 1px solid #c6c6c6;
    padding: 8px 16px 0 12px;
}

.nav-head {
    display: flex;
    align-items: center;
    gap: 32px;
    height: 30px;
    padding-right: 2px;
}

.nav-head h2 {
    margin: 0 auto 0 0;
    font-size: 23px;
    font-weight: 300;
    line-height: 30px;
    color: #2b579a;
}

.search {
    display: flex;
    align-items: center;
    height: 28px;
    margin: 6px 0 0;
    padding: 0 3px 0 2px;
    width: 252px;
    background: #fff;
    border: 1px solid #bbb;
}

.search input {
    flex: 1;
    min-width: 0;
}

.search input::placeholder {
    color: #666;
    opacity: 1;
}

.nav-tabs {
    display: flex;
    height: 42px;
    align-items: center;
    padding: 4px 0 0 1px;
    gap: 22px;
}

.nav-tabs .active {
    font-weight: 700;
    color: #1e4f9e;
}

.headings {
    list-style: none;
    margin: 1px 0 0 16px;
    width: 222px;
    padding: 0;
    border-top: 2px solid #d0d0d0;
}

.headings a {
    display: block;
    line-height: 30px;
    padding-left: 5px;
}

.headings .current {
    background: #c2d5f2;
}

.v-side {
    width: 23px;
    flex: none;
    display: flex;
    flex-direction: column;
}

.tab-stop {
    width: 21px;
    height: 21px;
    display: flex;
    align-items: center;
    justify-content: center;
    background: #fff;
    border: 2px solid #d0d0d0;
}

.v-ruler {
    flex: 1;
    min-height: 0;
    width: 14px;
    margin: 4px 0 0 3px;
    padding-top: 12px;
    background: #fff;
    overflow: hidden;
    font-size: 11px;
    line-height: 14px;
}

.v-ruler span {
    display: flex;
    align-items: center;
    justify-content: center;
    height: 76px;
    writing-mode: vertical-rl;
    transform: rotate(180deg);
    background:
        linear-gradient(#777, #777) 6px 18px / 1px 2px no-repeat,
        linear-gradient(#777, #777) 6px 56px / 1px 2px no-repeat,
        linear-gradient(#666, #666) 5px 75px / 5px 1px no-repeat;
}

.canvas {
    flex: 1;
    min-width: 0;
    display: flex;
    flex-direction: column;
    padding: 4px 93px 0 76px;
}

.h-ruler {
    position: relative;
    height: 13px;
    margin-bottom: 8px;
    flex: none;
}

.h-scale {
    display: flex;
    overflow: hidden;
    height: 13px;
    font-size: 11px;
    line-height: 13px;
    background: linear-gradient(to right, #c6c6c6 144px, #fff 144px, #fff 980px, #c6c6c6 980px);
}

.h-scale span {
    flex: none;
    width: 76px;
    text-align: center;
    background:
        linear-gradient(#666, #666) 0 5px / 1px 5px no-repeat,
        linear-gradient(#777, #777) 19px 7px / 2px 1px no-repeat,
        linear-gradient(#777, #777) 57px 7px / 2px 1px no-repeat;
}

.h-scale span:first-child {
    margin-left: -45px;
}

.indent-left,
.indent-first {
    position: absolute;
    left: 139px;
    top: 7px;
}

.indent-first {
    left: 234px;
    top: -3px;
}

.sheet {
    position: relative;
    flex: 1;
    min-height: 0;
    overflow: hidden;
    background: #fff;
    border-left: 1px solid #d0d0d0;
    border-right: 1px solid #d0d0d0;
    padding: 150px 144px 0 144px;
    color: #000;
}

.sheet h1 {
    margin: 0 0 210px;
    font-family: "DejaVu Sans", sans-serif;
    font-size: 53px;
    font-weight: 700;
    line-height: 60px;
    text-align: center;
    -webkit-text-stroke: 3px #000;
}

.sheet p {
    margin: 0;
    font-family: "Liberation Serif", serif;
    font-size: 32px;
    line-height: 37px;
    text-indent: 97px;
    text-align: justify;
    text-align-last: justify;
}

.keep {
    white-space: nowrap;
}

.cursor {
    display: inline-block;
    width: 1px;
    height: 35px;
    margin: -5px -1px -5px 0;
    vertical-align: -6px;
    background: #000;
}

.img-tag {
    position: absolute;
    left: 24px;
    top: 270px;
    font-family: Lato, sans-serif;
    font-size: 89px;
    line-height: 106px;
    color: #ed1c24;
}

/* Status bar */
.status {
    height: 34px;
    flex: none;
    display: flex;
    align-items: center;
    gap: 23px;
    padding-left: 11px;
    background: #f0f0f0;
    border-top: 1px solid #d0d0d0;
    font-size: 11px;
    color: #666;
}

.views {
    margin-left: auto;
    align-self: stretch;
    display: flex;
    align-items: center;
    padding-right: 12px;
}

.view {
    width: 42px;
    height: 33px;
    display: flex;
    align-items: center;
    justify-content: center;
}

.view.on {
    background: #c6c6c6;
}

.zoom-btn {
    margin-left: 4px;
}

.zoom {
    appearance: none;
    width: 104px;
    height: 12px;
    margin: 0 0 0 2px;
    background:
        linear-gradient(#999, #999) 52px 3px / 1px 6px no-repeat,
        linear-gradient(#a5a5a5, #a5a5a5) 0 6px / 100% 1px no-repeat;
}

.zoom::-webkit-slider-thumb {
    appearance: none;
    width: 4px;
    height: 12px;
    background: #666;
}

.percent {
    width: 45px;
    text-align: right;
}

/* Taskbar */
.taskbar {
    position: relative;
    height: 40px;
    flex: none;
    display: flex;
    justify-content: space-between;
    color: #fff;
}

.wallpaper {
    position: absolute;
    width: 100%;
    height: 40px;
    overflow: hidden;
}

.apps,
.tray {
    position: relative;
    display: flex;
    align-items: center;
    gap: 4px;
}

.start {
    width: 46px;
    padding-left: 11px;
}

.app {
    width: 57px;
    height: 38px;
    display: flex;
    align-items: center;
    justify-content: center;
    border: 1px solid transparent;
}

.app.first {
    margin-left: 2px;
}

.app.open {
    background: rgba(190, 205, 205, 0.3);
    border-color: rgba(210, 225, 225, 0.5);
}

.app.front {
    background: rgba(210, 220, 220, 0.5);
    border-color: #dfe8e8;
}

.logo {
    font-family: "Open Sans", sans-serif;
    font-size: 16px;
    font-weight: 700;
    fill: #fff;
}

.logo.w {
    font-size: 14px;
}

.tray {
    gap: 10px;
    padding-right: 12px;
}

.tray .up {
    margin: 0 5px;
}

.clock {
    width: 74px;
    margin-left: 4px;
    line-height: 18px;
    text-align: center;
    white-space: nowrap;
}

.marks {
    position: absolute;
    top: 120px;
    left: 960px;
    z-index: 5;
    pointer-events: none;
}
```
